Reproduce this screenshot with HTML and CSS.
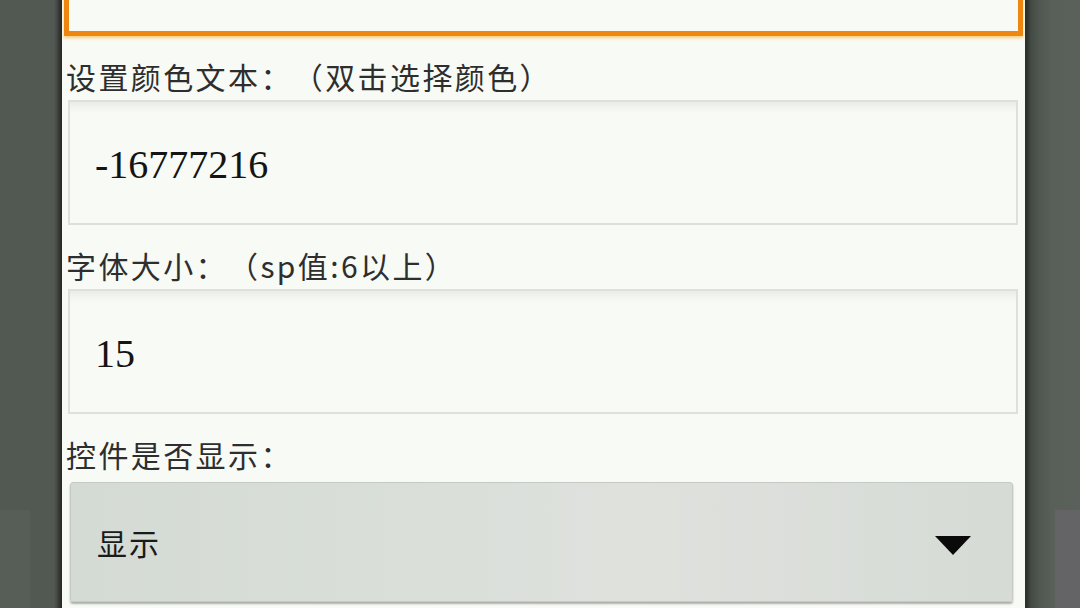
FILE: index.html
```html
<!DOCTYPE html>
<html lang="zh-CN">
<head>
<meta charset="utf-8">
<title>控件设置</title>
<link rel="stylesheet" href="styles.css">
</head>
<body>
<div class="screen">
  <div class="side side-left"></div>
  <div class="panel">
    <div class="field focused"></div>
    <div class="label">设置颜色文本：（双击选择颜色）</div>
    <div class="field"><span class="value">-16777216</span></div>
    <div class="label">字体大小：（sp值:6以上）</div>
    <div class="field"><span class="value">15</span></div>
    <div class="label">控件是否显示：</div>
    <div class="spinner">
      <span class="spinner-text">显示</span>
      <svg class="caret" width="36" height="19" viewBox="0 0 36 19"><polygon points="0,0 36,0 18,19" fill="#0a0a0a"/></svg>
    </div>
  </div>
  <div class="side side-right"></div>
</div>
</body>
</html>
```

FILE: styles.css
```css
html, body {
  margin: 0;
  padding: 0;
}
body {
  width: 1080px;
  height: 608px;
  overflow: hidden;
  background: #555b55;
  font-family: "Noto Sans CJK SC", "Noto Sans", sans-serif;
}
.screen {
  display: flex;
  height: 608px;
}
.side {
  flex: none;
  height: 100%;
}
.side-left {
  width: 62px;
  position: relative;
  background:
    linear-gradient(to right, rgba(0,0,0,0) 0, rgba(0,0,0,0) 54px, rgba(0,0,0,0.18) 57px, rgba(0,0,0,0.45) 60px, rgba(0,0,0,0.55) 62px),
    #525852;
}
.side-left::after {
  content: "";
  position: absolute;
  left: 0;
  width: 30px;
  top: 510px;
  bottom: 0;
  background: rgba(255,255,255,0.03);
}
.side-right {
  width: 55px;
  background:
    linear-gradient(to right, #2c302c 0, #2f332f 2px, #444a44 6px, #525852 16px, #596059 28px, #5a605a 100%);
  position: relative;
}
.side-right::after {
  content: "";
  position: absolute;
  left: 30px;
  right: 0;
  top: 510px;
  bottom: 0;
  background: #646467;
}
.panel {
  flex: none;
  width: 963px;
  background: #f7faf5;
  padding: 0 7px 0 6px;
  box-sizing: border-box;
  display: flex;
  flex-direction: column;
  overflow: hidden;
}
.field {
  flex: none;
  height: 125px;
  box-sizing: border-box;
  border: 2px solid #dde0db;
  background: #f7faf5;
  box-shadow: inset 0 12px 10px -8px rgba(0,0,0,0.07);
  display: flex;
  align-items: center;
  padding-left: 25px;
}
.field.focused {
  margin: -89px -5px 0 -4px;
  border: 5px solid #ee8612;
  box-shadow: 0 2px 3px rgba(255,170,40,0.6);
  background: #f8faf6;
}
.value {
  font-family: "Liberation Serif", "Times New Roman", serif;
  font-size: 40px;
  color: #141414;
  line-height: 1;
  padding-top: 4px;
}
.label {
  flex: none;
  height: 64px;
  box-sizing: border-box;
  padding-top: 18px;
  line-height: 44px;
  font-size: 30px;
  letter-spacing: 2.4px;
  color: #2e2e2e;
  white-space: nowrap;
  margin-left: -2px;
  text-spacing-trim: space-all;
}
.spinner {
  flex: none;
  height: 120px;
  margin: 4px 5px 0 2px;
  box-sizing: border-box;
  border: 1px solid #c6cac5;
  border-radius: 3px;
  background: linear-gradient(to right, #d4dad4 0, #dadfda 40%, #dfe1dd 60%, #d6dbd6 100%);
  box-shadow: 0 2px 2px rgba(0,0,0,0.3);
  display: flex;
  align-items: center;
  justify-content: space-between;
  padding: 0 41px 0 26px;
}
.spinner-text {
  font-size: 30px;
  color: #1a1a1a;
  letter-spacing: 2px;
}
.caret {
  display: block;
  margin-top: 6px;
}
```
